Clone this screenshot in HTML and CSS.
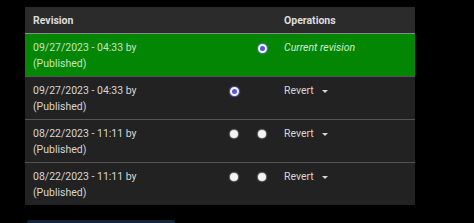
FILE: index.html
```html
<!DOCTYPE html>
<html lang="en">

<head>
	<meta charset="UTF-8" />
	<title>Revisions</title>
	<link rel="stylesheet" href="styles.css">
</head>

<body>
	<table class="revisions">
		<thead>
			<tr>
				<th colspan="3">Revision</th>
				<th class="ops">Operations</th>
			</tr>
		</thead>
		<tbody>
			<tr class="current">
				<td class="rev">09/27/2023 - 04:33 by<br>(Published)</td>
				<td class="pick"></td>
				<td class="pick"><span class="radio checked"></span></td>
				<td class="ops"><em>Current revision</em></td>
			</tr>
			<tr>
				<td class="rev">09/27/2023 - 04:33 by<br>(Published)</td>
				<td class="pick"><span class="radio checked"></span></td>
				<td class="pick"></td>
				<td class="ops">Revert <span class="caret"></span></td>
			</tr>
			<tr>
				<td class="rev">08/22/2023 - 11:11 by<br>(Published)</td>
				<td class="pick"><span class="radio"></span></td>
				<td class="pick"><span class="radio"></span></td>
				<td class="ops">Revert <span class="caret"></span></td>
			</tr>
			<tr>
				<td class="rev">08/22/2023 - 11:11 by<br>(Published)</td>
				<td class="pick"><span class="radio"></span></td>
				<td class="pick"><span class="radio"></span></td>
				<td class="ops">Revert <span class="caret"></span></td>
			</tr>
		</tbody>
	</table>
	<div class="compare-button"></div>
</body>

</html>
```

FILE: styles.css
```css
html {
	background: #000;
}

body {
	margin: 0;
	padding: 7px 0 0 25px;
	font-family: Roboto, "Liberation Sans", sans-serif;
	font-size: 10.5px;
	color: #d6d6d6;
	background: #000;
}

.revisions {
	width: 390px;
	border-collapse: collapse;
	background-color: #222222;
}

.revisions th {
	background-color: #2b2b2b;
	text-align: left;
	font-weight: bold;
	color: #dcdcdc;
	height: 26px;
	padding: 0 8px;
	vertical-align: middle;
}

.revisions td {
	border-top: 1px solid #555555;
	padding: 6px 8px 4px;
	line-height: 16px;
	vertical-align: top;
	height: 32px;
}

.revisions td.rev {
	width: 179px;
}

.revisions td.pick {
	width: 28px;
	padding: 6px 0 0;
	text-align: center;
}

.revisions .ops {
	padding-left: 8px;
}

.current td {
	background-color: #038603;
	color: #c6e4c6;
	border-top-color: #8a8a8a;
}

.current em {
	color: #cfeccf;
}

.radio {
	display: inline-block;
	width: 8px;
	height: 8px;
	margin-top: 4px;
	border-radius: 50%;
	background: #f4f4f4;
	box-shadow: 0 0 1px 1px rgba(255, 255, 255, 0.35);
}

.radio.checked {
	width: 5px;
	height: 5px;
	background: #5656d8;
	border: 2px solid #f4f4f4;
	box-shadow: 0 0 1px 1px rgba(120, 120, 255, 0.6);
}

.caret {
	display: inline-block;
	margin-left: 6px;
	vertical-align: middle;
	border-left: 3px solid transparent;
	border-right: 3px solid transparent;
	border-top: 3px solid #d6d6d6;
}

.compare-button {
	width: 148px;
	height: 3px;
	margin: 15px 0 0 2px;
	background: #12233a;
	border-radius: 2px 2px 0 0;
}
```
